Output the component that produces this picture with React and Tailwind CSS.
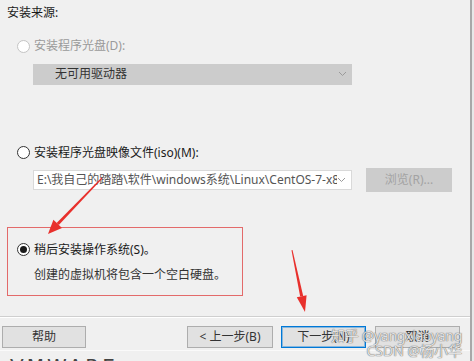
const font = { fontFamily: '"Noto Sans", "Noto Sans CJK SC", sans-serif' };

function Radio({ checked = false, disabled = false }) {
  return (
    <span
      className={`flex h-[13px] w-[13px] shrink-0 items-center justify-center rounded-full border bg-white ${
        disabled ? 'border-[#c4c4c4]' : 'border-[#333333]'
      }`}
    >
      {checked && <span className="h-[7px] w-[7px] rounded-full bg-[#1a1a1a]" />}
    </span>
  );
}

function Chevron() {
  return (
    <svg width="9" height="6" viewBox="0 0 9 6" className="shrink-0">
      <path d="M1 1 L4.5 4.5 L8 1" fill="none" stroke="#9a9a9a" strokeWidth="1" />
    </svg>
  );
}

function Btn({ children, focused = false, className = '' }) {
  return (
    <div
      className={`flex h-[22px] items-center justify-center border text-[12px] text-[#333] ${
        focused ? 'border-[#0078d7] bg-[#e1e1e1] ring-1 ring-inset ring-[#0078d7]/40' : 'border-[#adadad] bg-[#e1e1e1]'
      } ${className}`}
    >
      {children}
    </div>
  );
}

export default function App() {
  return (
    <div className="relative flex h-[361px] w-[474px] overflow-hidden bg-[#f0f0f0] text-[12px] text-[#1a1a1a]" style={font}>
      <div className="flex w-[470px] flex-col">
        <div className="pl-[7px] pt-[5px] leading-[16px]">安装来源:</div>

        <div className="mt-[17px] flex h-[16px] items-center gap-[4px] pl-[17px] text-[#9a9a9a]">
          <Radio disabled />
          <span className="leading-[16px]">安装程序光盘(D):</span>
        </div>

        <div className="ml-[33px] mt-[10px] flex h-[21px] w-[319px] items-center justify-between bg-[#cccccc] pl-[22px] pr-[5px] text-[#333]">
          <span>无可用驱动器</span>
          <Chevron />
        </div>

        <div className="mt-[60px] flex h-[16px] items-center gap-[4px] pl-[17px]">
          <Radio />
          <span className="leading-[16px]">安装程序光盘映像文件(iso)(M):</span>
        </div>

        <div className="mt-[7px] flex h-[24px] items-center pl-[33px]">
          <div className="flex h-[20px] w-[319px] items-center border border-[#d9d9d9] bg-white pl-[3px] pr-[5px] text-[#555]">
            <span className="flex-1 overflow-hidden whitespace-nowrap">E:\我自己的踏踏\软件\windows系统\Linux\CentOS-7-x8</span>
            <Chevron />
          </div>
          <div className="ml-[14px] flex h-[24px] w-[86px] items-center justify-center bg-[#cccccc] text-[#a3a3a3]">浏览(R)...</div>
        </div>

        <div className="ml-[7px] mt-[35px] flex h-[70px] w-[236px] flex-col border border-[#e36a6a] pl-[9px] pt-[14px]">
          <div className="flex h-[16px] items-center gap-[4px]">
            <Radio checked />
            <span className="leading-[16px]">稍后安装操作系统(S)。</span>
          </div>
          <div className="mt-[9px] pl-[17px] leading-[16px] text-[#333]">创建的虚拟机将包含一个空白硬盘。</div>
        </div>

        <div className="mt-[20px] h-[1px] bg-[#cfcfcf]" />
        <div className="h-[1px] bg-white" />

        <div className="mt-[8px] flex h-[22px] items-center">
          <Btn className="ml-[2px] w-[84px]">帮助</Btn>
          <Btn className="ml-[101px] w-[86px]">&lt; 上一步(B)</Btn>
          <Btn focused className="ml-[8px] w-[85px]">下一步(N)</Btn>
          <Btn className="ml-[9px] w-[85px]">取消</Btn>
        </div>

        <div className="mt-[2px] h-[1px] bg-[#fafafa]" />
        <div className="h-[10px] overflow-hidden pl-[10px]">
          <span className="block pt-[5px] text-[20px] leading-[20px] tracking-[3px] text-[#444]" style={{ fontFamily: '"DejaVu Sans", sans-serif' }}>
            VMWARE
          </span>
        </div>
      </div>
      <div className="w-[2px] bg-[#a8a8a8]" />
      <div className="w-[2px] bg-[#e8e8e8]" />

      {/* annotation arrows */}
      <svg className="pointer-events-none absolute inset-0" width="474" height="361" viewBox="0 0 474 361">
        <polygon points="102.4,178.4 101.6,177.6 56.6,222.9 58.8,225" fill="#e8302c" />
        <polygon points="48,234 53.4,219.7 62,228.1" fill="#e8302c" />
        <polygon points="292.5,250 291.5,250.2 300.2,296.6 303.2,296" fill="#e8302c" />
        <polygon points="305,312 296.8,297.3 306.6,295.3" fill="#e8302c" />
      </svg>

      {/* watermark */}
      <div className="pointer-events-none absolute right-[12px] top-[328px] flex flex-col items-end text-white/80 [text-shadow:0_0_1px_#666,0_0_1px_#666]">
        <span className="h-[15px] whitespace-nowrap text-[14px] leading-[15px] tracking-[-0.3px]">知乎 @yangxiaoyang</span>
        <span className="h-[15px] whitespace-nowrap text-[14px] leading-[15px]">CSDN @杨小华</span>
      </div>
    </div>
  );
}
